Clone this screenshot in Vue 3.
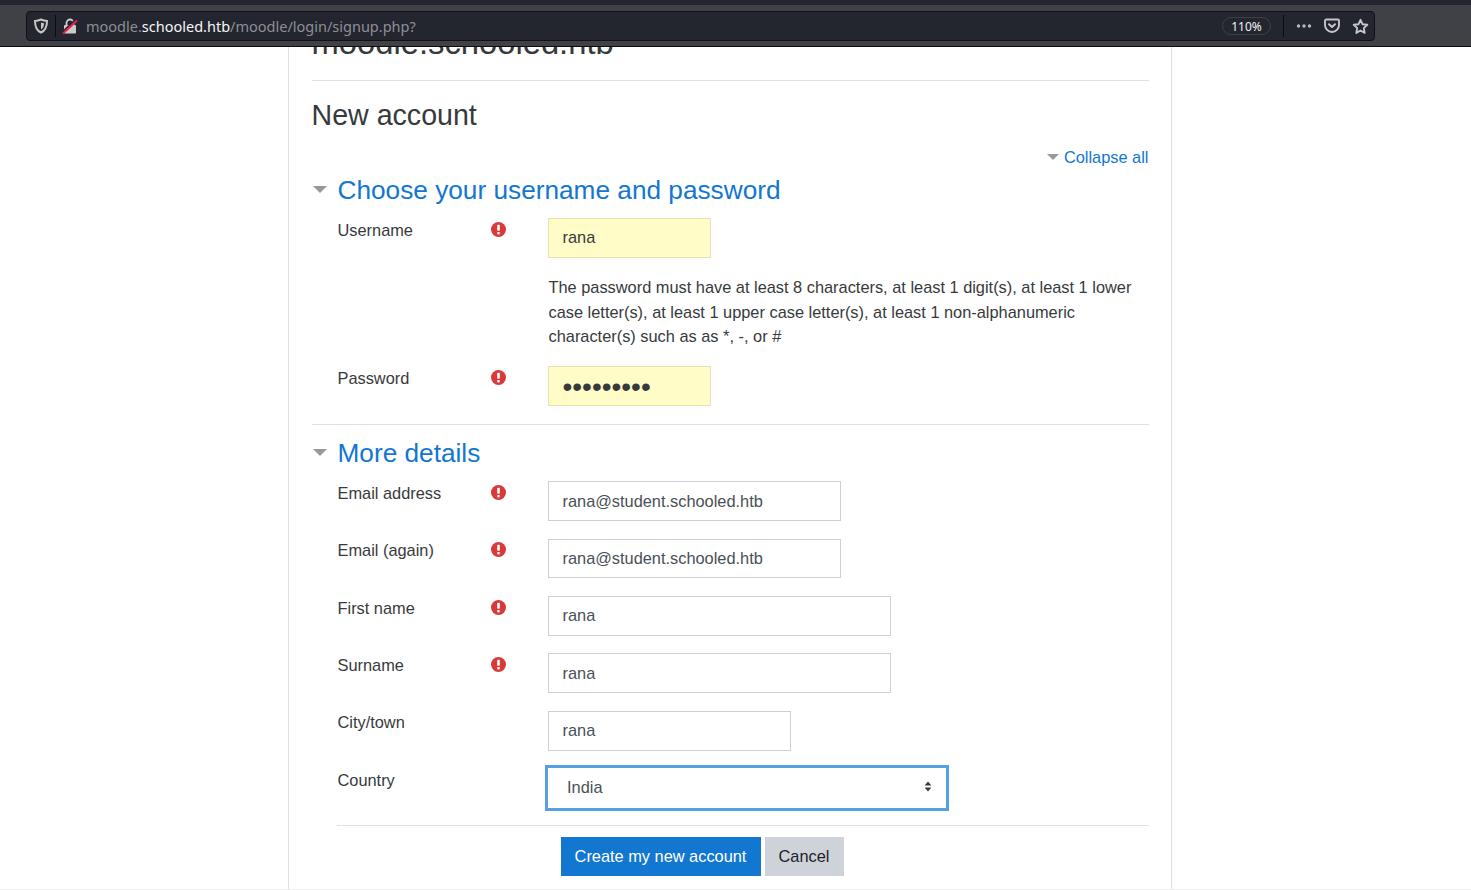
<script setup>
const firstRows = [
  { label: 'Email address', value: 'rana@student.schooled.htb', width: 'w293', req: true },
  { label: 'Email (again)', value: 'rana@student.schooled.htb', width: 'w293', req: true },
  { label: 'First name', value: 'rana', width: 'w343', req: true },
  { label: 'Surname', value: 'rana', width: 'w343', req: true },
  { label: 'City/town', value: 'rana', width: 'w243', req: false }
]
</script>

<template>
  <div class="window">
    <header class="chrome">
      <div class="tabstrip"></div>
      <div class="toolbar">
        <div class="urlbar">
          <svg class="ic shield" width="16" height="16" viewBox="0 0 16 16"><path d="M8 1.500c2 .9 3.900 1.300 6 1.400 0 5-1 9.300-6 11.600C3 12.200 2 7.900 2 2.900c2.100-.1 4-.5 6-1.400z" fill="none" stroke="#c5c6c9" stroke-width="2"/><path d="M8 4.500c1 .4 2 .6 3 .7 0 2.700-.7 4.900-3 6.300z" fill="#c5c6c9"/></svg>
          <span class="vsep first"></span>
          <svg class="ic lock" width="16" height="16" viewBox="0 0 16 16"><path d="M4.500 7.500V5a3.500 3.500 0 0 1 7 0v2.500" fill="none" stroke="#c9cacc" stroke-width="1.800"/><rect x="2" y="7" width="12" height="8.500" rx="1" fill="#c9cacc"/><path d="M0 14.500 14.500 1" stroke="#23252f" stroke-width="2"/><path d="M1 15.500 15 2.500" stroke="#ee1f4c" stroke-width="2"/></svg>
          <span class="url"><span class="dim">moodle.</span><span class="host">schooled.htb</span><span class="dim">/moodle/login/signup.php?</span></span>
          <span class="spacer"></span>
          <span class="zoompill">110%</span>
          <span class="vsep second"></span>
          <svg class="ic dots" width="16" height="16" viewBox="0 0 16 16"><circle cx="2.500" cy="8" r="1.700" fill="#b9babd"/><circle cx="8" cy="8" r="1.700" fill="#b9babd"/><circle cx="13.500" cy="8" r="1.700" fill="#b9babd"/></svg>
          <svg class="ic pocket" width="16" height="16" viewBox="0 0 16 16"><path d="M2.300 1.500h11.400c.7 0 1.300.6 1.300 1.300V7A7 7 0 0 1 1 7V2.800c0-.7.6-1.300 1.300-1.300z" fill="none" stroke="#c5c6c9" stroke-width="1.900"/><path d="M5 6.200 8 9l3-2.800" fill="none" stroke="#c5c6c9" stroke-width="2" stroke-linecap="round" stroke-linejoin="round"/></svg>
          <svg class="ic star" width="17" height="17" viewBox="0 0 17 17"><path d="M8.500 1.800l2 4.400 4.800.6-3.500 3.300.9 4.800-4.200-2.400-4.200 2.400.9-4.800L1.700 6.800l4.800-.6z" fill="none" stroke="#c5c6c9" stroke-width="1.900" stroke-linejoin="round"/></svg>
        </div>
      </div>
    </header>

    <main class="viewport">
      <div class="page">
        <h1 class="site">moodle.schooled.htb</h1>
        <hr class="rule top" />
        <h2 class="title">New account</h2>
        <div class="collapse"><span class="tri small"></span><a class="link">Collapse all</a></div>

        <section>
          <h3 class="legend"><span class="tri"></span><a class="link">Choose your username and password</a></h3>
          <div class="row">
            <label class="lab">Username</label>
            <span class="req"><svg width="15" height="15" viewBox="0 0 15 15"><circle cx="7.500" cy="7.500" r="7.500" fill="#d83a3a"/><rect x="6.200" y="2.800" width="2.600" height="6" rx=".8" fill="#fff"/><rect x="6.200" y="10" width="2.600" height="2.400" rx=".8" fill="#fff"/></svg></span>
            <input class="field auto w163" value="rana" readonly />
          </div>
          <p class="help">The password must have at least 8 characters, at least 1 digit(s), at least 1 lower case letter(s), at least 1 upper case letter(s), at least 1 non-alphanumeric character(s) such as as *, -, or #</p>
          <div class="row">
            <label class="lab">Password</label>
            <span class="req"><svg width="15" height="15" viewBox="0 0 15 15"><circle cx="7.500" cy="7.500" r="7.500" fill="#d83a3a"/><rect x="6.200" y="2.800" width="2.600" height="6" rx=".8" fill="#fff"/><rect x="6.200" y="10" width="2.600" height="2.400" rx=".8" fill="#fff"/></svg></span>
            <input class="field auto w163 pass" type="password" value="ranaranaX" readonly />
          </div>
        </section>

        <hr class="rule mid" />

        <section class="details">
          <h3 class="legend second"><span class="tri"></span><a class="link">More details</a></h3>
          <div v-for="r in firstRows" :key="r.label" class="row">
            <label class="lab">{{ r.label }}</label>
            <span class="req">
              <svg v-if="r.req" width="15" height="15" viewBox="0 0 15 15"><circle cx="7.500" cy="7.500" r="7.500" fill="#d83a3a"/><rect x="6.200" y="2.800" width="2.600" height="6" rx=".8" fill="#fff"/><rect x="6.200" y="10" width="2.600" height="2.400" rx=".8" fill="#fff"/></svg>
            </span>
            <input class="field" :class="r.width" :value="r.value" readonly />
          </div>
          <div class="row last">
            <label class="lab">Country</label>
            <span class="req"></span>
            <div class="selectbox">
              <select class="select"><option>India</option></select>
              <svg class="updown" width="8" height="11" viewBox="0 0 8 12"><path d="M4 .5 7.700 4.800H.3zM4 11.500.3 7.200h7.400z" fill="#373a3c"/></svg>
            </div>
          </div>
        </section>

        <hr class="rule actions-rule" />
        <div class="actions">
          <button class="btn primary">Create my new account</button>
          <button class="btn secondary">Cancel</button>
        </div>
      </div>
    </main>
  </div>
</template>

<style>
html, body { margin: 0; background: #fff; }
</style>

<style scoped>
.window { width: 1471px; height: 890px; overflow: hidden; display: flex; flex-direction: column; font-family: "Liberation Sans", Arial, sans-serif; color: #373a3c; background: #fff; }
.chrome { flex: 0 0 47px; display: flex; flex-direction: column; background: #3f4146; border-bottom: 1px solid #0c0c0d; box-sizing: border-box; position: relative; z-index: 1; }
.tabstrip { height: 5px; background: #23252f; }
.toolbar { flex: 1; padding: 6px 96px 0 26px; }
.urlbar { height: 30px; box-sizing: border-box; background: #23252f; border: 1px solid #111217; border-radius: 4px; display: flex; align-items: center; padding-left: 6px; }
.ic { flex: none; display: block; }
.vsep { width: 1px; height: 22px; background: #0c0c0d; flex: none; }
.vsep.first { margin: 0 6px 0 6px; }
.url { font-family: "Noto Sans", sans-serif; font-size: 14.500px; margin-left: 8px; white-space: nowrap; }
.dim { color: #8e8f94; }
.host { color: #f6f6f7; }
.spacer { flex: 1; }
.zoompill { font-family: "Noto Sans", sans-serif; font-size: 12px; color: #f3f3f4; border: 1px solid #3d3f49; border-radius: 9px; height: 18px; line-height: 17px; width: 49px; box-sizing: border-box; text-align: center; }
.vsep.second { margin: 0 12px 0 12px; }
.dots { margin-right: 12px; }
.pocket { margin-right: 12px; }
.star { margin-right: 5px; }

.viewport { flex: 1; overflow: hidden; border-bottom: 1px solid #eeeeee; }
.page { width: 884px; margin: 0 auto; height: 870px; box-sizing: border-box; padding: 0 22px 0 23px; border-left: 1px solid #dee2e6; border-right: 1px solid #dee2e6; position: relative; left: -6px; }
.site { margin: -24px 0 0; font-weight: 400; font-size: 32.750px; line-height: 40px; color: #373a3c; white-space: nowrap; }
.rule { border: 0; border-top: 1px solid #dee2e6; margin: 0; }
.rule.top { margin-top: 17px; }
.title { margin: 16px 0 0; font-weight: 400; font-size: 28.600px; line-height: 36px; color: #373a3c; }
.collapse { margin-top: 12px; display: flex; justify-content: flex-end; align-items: center; font-size: 16.370px; line-height: 24px; }
.link { color: #1177d1; }
.tri { display: inline-block; width: 0; height: 0; border-left: 7px solid transparent; border-right: 7px solid transparent; border-top: 7px solid #999; flex: none; }
.tri.small { border-left-width: 6.500px; border-right-width: 6.500px; border-top-width: 6.500px; margin-right: 5px; }
.legend { margin: 5px 0 12px; font-weight: 400; font-size: 26.220px; line-height: 32px; display: flex; align-items: center; padding-left: 1px; }
.legend .tri { margin-right: 11px; margin-top: -2px; }
.legend.second { margin-top: 12px; margin-bottom: 12px; }
.row { display: flex; align-items: flex-start; padding-left: 26px; margin-bottom: 17.500px; height: 39.950px; }
.lab { width: 153px; flex: none; font-size: 16.370px; line-height: 24.750px; }
.req { width: 57px; flex: none; display: flex; height: 24px; padding-top: 4px; box-sizing: border-box; }
.req svg { display: block; }
.details .lab, .details .req { margin-top: -0.410px; }
.field { box-sizing: border-box; height: 39.950px; border: 1px solid #ccd0d8; background: #fff; padding: 0 14px; font: 16.370px "Liberation Sans", Arial, sans-serif; color: #495057; outline: none; border-radius: 0; margin: 0; }
.field.auto { background: #fffcc8; border-color: #ecdfae; color: #373a3c; }
.field.pass { font-size: 28px; padding-top: 2px; }
.w163 { width: 163px; }
.w293 { width: 293px; }
.w343 { width: 343px; }
.w243 { width: 243px; }
.help { margin: -0.600px 0 16.600px 237px; width: 600px; font-size: 16.370px; line-height: 24.750px; }
.rule.mid { margin-top: 18.450px; }
.selectbox { position: relative; width: 398.500px; height: 39.950px; }
.select { display: block; appearance: none; -webkit-appearance: none; width: 100%; height: 100%; box-sizing: border-box; border: 1px solid #fff; outline: 3.600px solid #55a1e2; background: #fff; padding: 0 18.500px 3px; font: 16.370px "Liberation Sans", Arial, sans-serif; color: #495057; border-radius: 0; }
.updown { position: absolute; right: 14.500px; top: 13px; }
.row.last { margin-bottom: 0; }
.rule.actions-rule { margin: 16.700px 0 0 25px; }
.actions { margin-top: 11px; padding-left: 249px; display: flex; gap: 4px; }
.btn { height: 39px; box-sizing: border-box; border: 0; border-radius: 0; font: 16.370px "Liberation Sans", Arial, sans-serif; padding: 0; margin: 0; white-space: nowrap; }
.primary { background: #1177d1; color: #fff; width: 200px; }
.secondary { background: #ced3da; color: #1d2125; width: 79px; }
</style>
